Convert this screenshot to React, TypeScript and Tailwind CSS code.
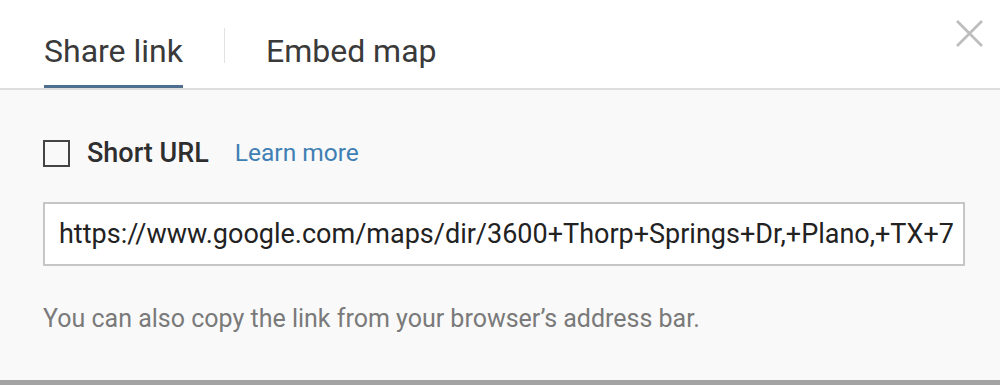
import React from "react";

const url = "https://www.google.com/maps/dir/3600+Thorp+Springs+Dr,+Plano,+TX+75025/@33.0461,-96.7519,12z";

export default function App() {
  return (
    <div className="flex h-[385px] w-[1000px] flex-col overflow-hidden bg-white font-['Roboto',_'Liberation_Sans',_sans-serif]">
      {/* Header with tabs */}
      <div className="flex h-[90px] shrink-0 justify-between border-b-2 border-[#dedede] bg-white">
        <div className="flex items-start pl-[44px]">
          <div className="flex flex-col pt-[31px]">
            <span className="text-[32px] leading-[40px] text-[#3a3a3a]">Share link</span>
            <div className="mt-[14px] h-[3px] bg-[#4f6f8f]" />
          </div>
          <div className="mx-[41px] mt-[28px] h-[35px] w-px bg-[#e2e2e2]" />
          <div className="pt-[31px]">
            <span className="text-[32px] leading-[40px] text-[#3a3a3a]">Embed map</span>
          </div>
        </div>
        <button className="mr-[17px] mt-[20px] h-[27px] w-[27px] text-[#bdbdbd]">
          <svg viewBox="0 0 26 26" className="h-[27px] w-[27px]" fill="none" stroke="currentColor" strokeWidth="2.6">
            <path d="M1 1L25 25M25 1L1 25" />
          </svg>
        </button>
      </div>

      {/* Body */}
      <div className="flex flex-1 flex-col bg-[#f9f9f9] px-[43px] pt-[48px]">
        <div className="flex items-center">
          <div className="h-[27px] w-[27px] border-2 border-[#444] bg-[#f9f9f9]" />
          <span className="ml-[17px] text-[27px] font-medium leading-[30px] text-[#2e2e2e]">Short URL</span>
          <a href="#" className="ml-[26px] text-[24.5px] leading-[30px] text-[#3f7fb3]">
            Learn more
          </a>
        </div>
        <div className="mt-[34px] flex h-[64px] w-[922px] items-center overflow-hidden border-2 border-[#c6c6c6] bg-white pl-[14px] pr-[10px]">
          <input
            readOnly
            value={url}
            className="w-full bg-transparent text-[27px] text-[#222] outline-none"
          />
        </div>
        <p className="mt-[38px] text-[25px] leading-[30px] text-[#7a7a7a]">
          You can also copy the link from your browser’s address bar.
        </p>
      </div>

      <div className="h-[5px] shrink-0 bg-[#a3a3a3]" />
    </div>
  );
}
